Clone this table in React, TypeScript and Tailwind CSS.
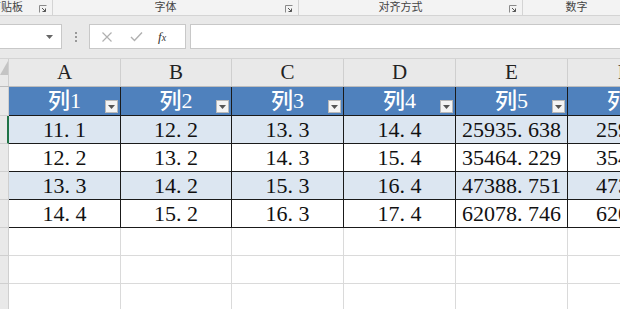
import React from 'react';

const colW = ['w-[112px]', 'w-[111px]', 'w-[112px]', 'w-[112px]', 'w-[112px]', 'w-[112px]'];
const letters = ['A', 'B', 'C', 'D', 'E', 'F'];
const heads = ['列1', '列2', '列3', '列4', '列5', '列6'];

const rows = [
  ['11.1', '12.2', '13.3', '14.4', '25935.638', '25936'],
  ['12.2', '13.2', '14.3', '15.4', '35464.229', '35464'],
  ['13.3', '14.2', '15.3', '16.4', '47388.751', '47389'],
  ['14.4', '15.2', '16.3', '17.4', '62078.746', '62079'],
];

function Launcher() {
  return (
    <svg width="8" height="8" viewBox="0 0 8 8" className="absolute right-[5px] top-[5px]">
      <path d="M0.5 7.5V0.5H7.5" fill="none" stroke="#8a8a8a" strokeWidth="1" />
      <path d="M3 3L6.5 6.5M6.5 3.5V6.5H3.5" fill="none" stroke="#555" strokeWidth="1" />
    </svg>
  );
}

// SimSun style: period sits in a half-width cell
function Num({ v }: { v: string }) {
  const [a, b] = v.split('.');
  return (
    <span className="whitespace-nowrap">
      {a}
      {b !== undefined && (
        <>
          <span className="inline-block w-[0.5em] text-left">.</span>
          {b}
        </>
      )}
    </span>
  );
}

function FilterBtn() {
  return (
    <div className="absolute right-[2px] bottom-[2px] w-[13px] h-[13px] bg-[#f4f4f4] border border-[#b9b9b9] flex items-center justify-center">
      <svg width="7" height="4" viewBox="0 0 7 4">
        <path d="M0 0H7L3.5 4Z" fill="#555" />
      </svg>
    </div>
  );
}

export default function App() {
  const cellFont = "font-['Liberation_Serif','Noto_Sans_CJK_SC',serif]";

  return (
    <div className="w-[620px] h-[309px] overflow-hidden bg-white font-['Liberation_Sans','Noto_Sans_CJK_SC',sans-serif]">
      {/* ribbon group labels */}
      <div className="flex h-[16px] bg-[#f3f3f3] border-b border-[#d4d4d4] text-[11px] leading-[15px] text-[#444]">
        <div className="relative w-[53px] shrink-0 border-r border-[#d4d4d4] overflow-hidden">
          <span className="block ml-[-10px] whitespace-nowrap">剪贴板</span>
          <Launcher />
        </div>
        <div className="relative w-[246px] shrink-0 border-r border-[#d4d4d4] text-center pr-[20px]">
          字体
          <Launcher />
        </div>
        <div className="relative w-[224px] shrink-0 border-r border-[#d4d4d4] text-center pr-[20px]">
          对齐方式
          <Launcher />
        </div>
        <div className="flex-1 text-center pl-[10px]">数字</div>
      </div>

      {/* formula bar */}
      <div className="bg-[#e9e9e9] pt-[8px] pb-[9px] border-b border-[#d4d4d4]">
        <div className="flex h-[25px] items-stretch">
          <div className="w-[62px] bg-white border border-[#c8c8c8] border-l-0 flex items-center justify-end pr-[8px]">
            <svg width="7" height="4" viewBox="0 0 7 4">
              <path d="M0 0H7L3.5 4Z" fill="#666" />
            </svg>
          </div>
          <div className="w-[27px] flex flex-col items-center justify-center gap-[2px]">
            <span className="w-[2px] h-[2px] bg-[#999]" />
            <span className="w-[2px] h-[2px] bg-[#999]" />
            <span className="w-[2px] h-[2px] bg-[#999]" />
          </div>
          <div className="w-[97px] bg-white border border-[#c8c8c8] flex items-center">
            <svg width="12" height="12" viewBox="0 0 12 12" className="ml-[11px]">
              <path d="M1.5 1.5L10.5 10.5M10.5 1.5L1.5 10.5" stroke="#b0b0b0" strokeWidth="1.2" />
            </svg>
            <svg width="13" height="11" viewBox="0 0 13 11" className="ml-[17px]">
              <path d="M1 6L4.5 9.5L12 1.5" fill="none" stroke="#b0b0b0" strokeWidth="1.4" />
            </svg>
            <span className="ml-[15px] font-['Liberation_Serif',serif] italic text-[13px] text-[#333] leading-none">
              f<span className="text-[10px]">x</span>
            </span>
          </div>
          <div className="flex-1 ml-[4px] bg-white border border-[#c8c8c8] border-r-0" />
        </div>
      </div>

      {/* column letters */}
      <div className="flex h-[28px] bg-[#e9e9e9] border-b border-[#bdbdbd] text-[21px] leading-[27px] text-[#222] font-['Liberation_Serif',serif]">
        <div className="relative w-[9px] shrink-0 border-r border-[#cfcfcf]">
          <svg width="8" height="14" viewBox="0 0 8 14" className="absolute right-0 top-[2px]">
            <path d="M8 0V14H0Z" fill="#c4c4c4" />
          </svg>
        </div>
        {letters.map((l, i) => (
          <div key={l} className={`${colW[i]} shrink-0 border-r border-[#cfcfcf] text-center`}>
            {l}
          </div>
        ))}
      </div>

      {/* table header */}
      <div className={`flex h-[29px] ${cellFont}`}>
        <div className="w-[9px] shrink-0 bg-[#e9e9e9] border-r border-b border-[#cfcfcf]" />
        {heads.map((h, i) => (
          <div
            key={h}
            className={`${colW[i]} shrink-0 relative bg-[#4f81bd] border-r border-b border-[#1a1a1a] text-white text-[22px] leading-[27px] font-medium text-center`}
          >
            {h}
            <FilterBtn />
          </div>
        ))}
      </div>

      {/* data rows */}
      {rows.map((r, ri) => (
        <div key={ri} className={`flex h-[28px] ${cellFont}`}>
          <div
            className={`w-[9px] shrink-0 bg-[#e9e9e9] border-b border-[#cfcfcf] ${
              ri === 0 ? 'border-r-2 border-r-[#217346]' : 'border-r'
            }`}
          />
          {r.map((v, ci) => (
            <div
              key={ci}
              className={`${colW[ci]} shrink-0 border-r border-b border-[#1a1a1a] text-[22px] leading-[27px] text-[#111] text-center ${
                ri % 2 === 0 ? 'bg-[#dce6f1]' : 'bg-white'
              }`}
            >
              <Num v={v} />
            </div>
          ))}
        </div>
      ))}

      {/* empty rows */}
      {[0, 1, 2].map((k) => (
        <div key={k} className="flex h-[28px]">
          <div className="w-[9px] shrink-0 bg-[#e9e9e9] border-r border-b border-[#cfcfcf]" />
          {colW.map((w, ci) => (
            <div key={ci} className={`${w} shrink-0 border-r border-b border-[#dadada]`} />
          ))}
        </div>
      ))}
    </div>
  );
}
